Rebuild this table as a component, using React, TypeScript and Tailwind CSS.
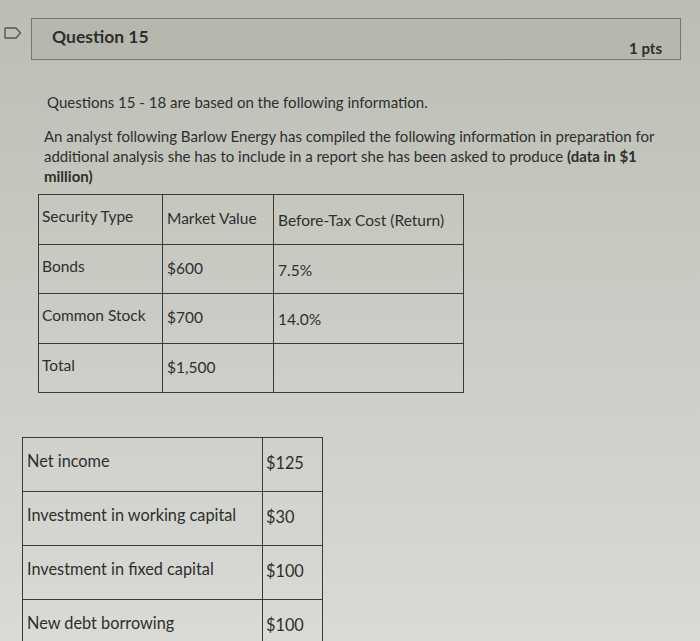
const securities = [
  { type: 'Security Type', value: 'Market Value', cost: 'Before-Tax Cost (Return)' },
  { type: 'Bonds', value: '$600', cost: '7.5%' },
  { type: 'Common Stock', value: '$700', cost: '14.0%' },
  { type: 'Total', value: '$1,500', cost: '' },
];

const cashItems = [
  { label: 'Net income', amount: '$125' },
  { label: 'Investment in working capital', amount: '$30' },
  { label: 'Investment in fixed capital', amount: '$100' },
  { label: 'New debt borrowing', amount: '$100' },
];

function FlagIcon() {
  return (
    <svg width="18" height="12" viewBox="0 0 18 12" className="mt-[9px] shrink-0">
      <path d="M1 1 H12 L16.5 6 L12 11 H1 Z" fill="none" stroke="#55575a" strokeWidth="1.4" strokeLinejoin="round" />
    </svg>
  );
}

export default function App() {
  return (
    <div
      className="w-[700px] h-[641px] overflow-hidden bg-linear-to-b from-[#bcbeb4] via-[#cbccc5] to-[#dadad6] text-[#2d2f2e] pt-[18px] pl-[4px] flex items-start gap-[9px]"
      style={{ fontFamily: 'Lato, "Open Sans", sans-serif' }}
    >
      <FlagIcon />
      <div className="w-[650px] shrink-0">
        <div className="h-[42px] bg-[#b6b8ad] border border-[#74766f] flex justify-between items-start pl-[20px] pr-[18px]">
          <h2 className="text-[17.5px] font-bold mt-[5px]">Question 15</h2>
          <span className="text-[15px] font-bold mt-[18px]">1 pts</span>
        </div>

        <div className="pl-[16px] pr-[16px] pt-[32px] text-[15px] leading-[20px]">
          <p className="mb-[14px]">Questions 15 - 18 are based on the following information.</p>
          <p className="-ml-[3px]">
            An analyst following Barlow Energy has compiled the following information in preparation for additional
            analysis she has to include in a report she has been asked to produce <b>(data in $1</b> <b>million)</b>
          </p>

          <table className="mt-[8px] ml-[-9px] border-collapse border-[1.5px] border-[#3a3b39] text-[15.5px]">
            <tbody>
              {securities.map((row, i) => (
                <tr key={i} className="h-[49.5px]">
                  <td className="w-[124px] border-[1.5px] border-[#3a3b39] align-top pt-[11px] pl-[3px]">{row.type}</td>
                  <td className="w-[111px] border-[1.5px] border-[#3a3b39] align-top pt-[13px] pl-[4px]">{row.value}</td>
                  <td className="w-[190px] border-[1.5px] border-[#3a3b39] align-top pt-[15px] pl-[4px]">{row.cost}</td>
                </tr>
              ))}
            </tbody>
          </table>

          <table className="mt-[44px] ml-[-25px] border-collapse border-[1.5px] border-[#3a3b39] text-[16.3px]">
            <tbody>
              {cashItems.map((row, i) => (
                <tr key={i} className="h-[54px]">
                  <td className="w-[240px] border-[1.5px] border-[#3a3b39] align-top pt-[13px] pl-[4px]">{row.label}</td>
                  <td className="w-[60px] border-[1.5px] border-[#3a3b39] align-top pt-[15px] pl-[3px]">{row.amount}</td>
                </tr>
              ))}
            </tbody>
          </table>
        </div>
      </div>
    </div>
  );
}
